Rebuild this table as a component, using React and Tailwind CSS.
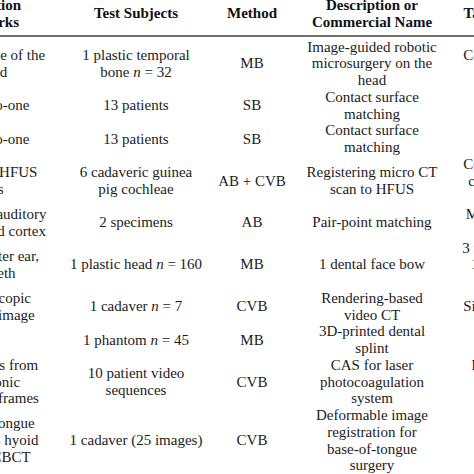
const rows = [
  {
    a: ["Surface of the", "its head"],
    b: ["1 plastic temporal", <>bone <i>n</i> = 32</>],
    c: "MB",
    d: ["Image-guided robotic", "microsurgery on the", "head"],
    e: ["Cochlear path", "planning"],
  },
  {
    a: ["One-to-one"],
    b: ["13 patients"],
    c: "SB",
    d: ["Contact surface", "matching"],
    e: [],
  },
  {
    a: ["One-to-one"],
    b: ["13 patients"],
    c: "SB",
    d: ["Contact surface", "matching"],
    e: [],
  },
  {
    a: ["CT to HFUS", "images"],
    b: ["6 cadaveric guinea", "pig cochleae"],
    c: "AB + CVB",
    d: ["Registering micro CT", "scan to HFUS"],
    e: ["Cochlear duct", "cochlea axis", "position"],
  },
  {
    a: ["Inner auditory", "ear and cortex"],
    b: ["2 specimens"],
    c: "AB",
    d: ["Pair-point matching"],
    e: ["Median error", "0.55 mm"],
  },
  {
    a: ["An outer ear,", "and teeth"],
    b: [<>1 plastic head <i>n</i> = 160</>],
    c: "MB",
    d: ["1 dental face bow"],
    e: ["3 registrations", "1 mm error", "each"],
  },
  {
    a: ["Endoscopic", "video image"],
    b: [<>1 cadaver <i>n</i> = 7</>],
    c: "CVB",
    d: ["Rendering-based", "video CT"],
    e: ["Simulated CT"],
  },
  {
    a: [],
    b: [<>1 phantom <i>n</i> = 45</>],
    c: "MB",
    d: ["3D-printed dental", "splint"],
    e: [],
  },
  {
    a: ["Vessels from", "ultrasonic", "video frames"],
    b: ["10 patient video", "sequences"],
    c: "CVB",
    d: ["CAS for laser", "photocoagulation", "system"],
    e: ["In vivo test", "in patient", "videos"],
  },
  {
    a: ["Base tongue", "and its hyoid", "with CBCT"],
    b: ["1 cadaver (25 images)"],
    c: "CVB",
    d: ["Deformable image", "registration for", "base-of-tongue", "surgery"],
    e: [],
  },
];

const Lines = ({ items }) => (
  <>
    {items.map((line, i) => (
      <div key={i} className="whitespace-nowrap">
        {line}
      </div>
    ))}
  </>
);

const App = () => {
  return (
    <div className="h-[474px] w-[474px] overflow-hidden bg-white font-['Liberation_Serif','Times_New_Roman',serif] text-[15px] leading-[16.75px] text-[#1c1c1c]">
      <div className="-ml-[47px] -mt-[3px]">
        <table className="w-[606px] table-fixed border-collapse">
          <colgroup>
            <col className="w-[108px]" />
            <col className="w-[150px]" />
            <col className="w-[82px]" />
            <col className="w-[158px]" />
            <col className="w-[108px]" />
          </colgroup>
          <thead>
            <tr className="font-bold text-[#111]">
              <th className="border-b-2 border-[#707070] pb-[4px] pr-[40px] align-middle">
                <div className="flex flex-col items-end">
                  <div className="whitespace-nowrap">Registration</div>
                  <div className="whitespace-nowrap pr-[2px]">Landmarks</div>
                </div>
              </th>
              <th className="border-b-2 border-[#707070] pb-[4px] text-center align-middle">Test Subjects</th>
              <th className="border-b-2 border-[#707070] pb-[4px] text-center align-middle">Method</th>
              <th className="border-b-2 border-[#707070] pb-[4px] text-center align-middle">
                Description or
                <br />
                Commercial Name
              </th>
              <th className="border-b-2 border-[#707070] pb-[4px] text-center align-middle">Target Error</th>
            </tr>
          </thead>
          <tbody>
            {rows.map((row, i) => (
              <tr key={i}>
                <td className={`pl-2 text-left align-middle ${i === 0 ? "pt-[2px]" : ""}`}>
                  <Lines items={row.a} />
                </td>
                <td className={`text-center align-middle ${i === 0 ? "pt-[2px]" : ""}`}>
                  <Lines items={row.b} />
                </td>
                <td className={`text-center align-middle ${i === 0 ? "pt-[2px]" : ""}`}>{row.c}</td>
                <td className={`text-center align-middle ${i === 0 ? "pt-[2px]" : ""}`}>
                  <Lines items={row.d} />
                </td>
                <td className={`text-center align-middle ${i === 0 ? "pt-[2px]" : ""}`}>
                  <Lines items={row.e} />
                </td>
              </tr>
            ))}
          </tbody>
        </table>
      </div>
    </div>
  );
};

export default App;
